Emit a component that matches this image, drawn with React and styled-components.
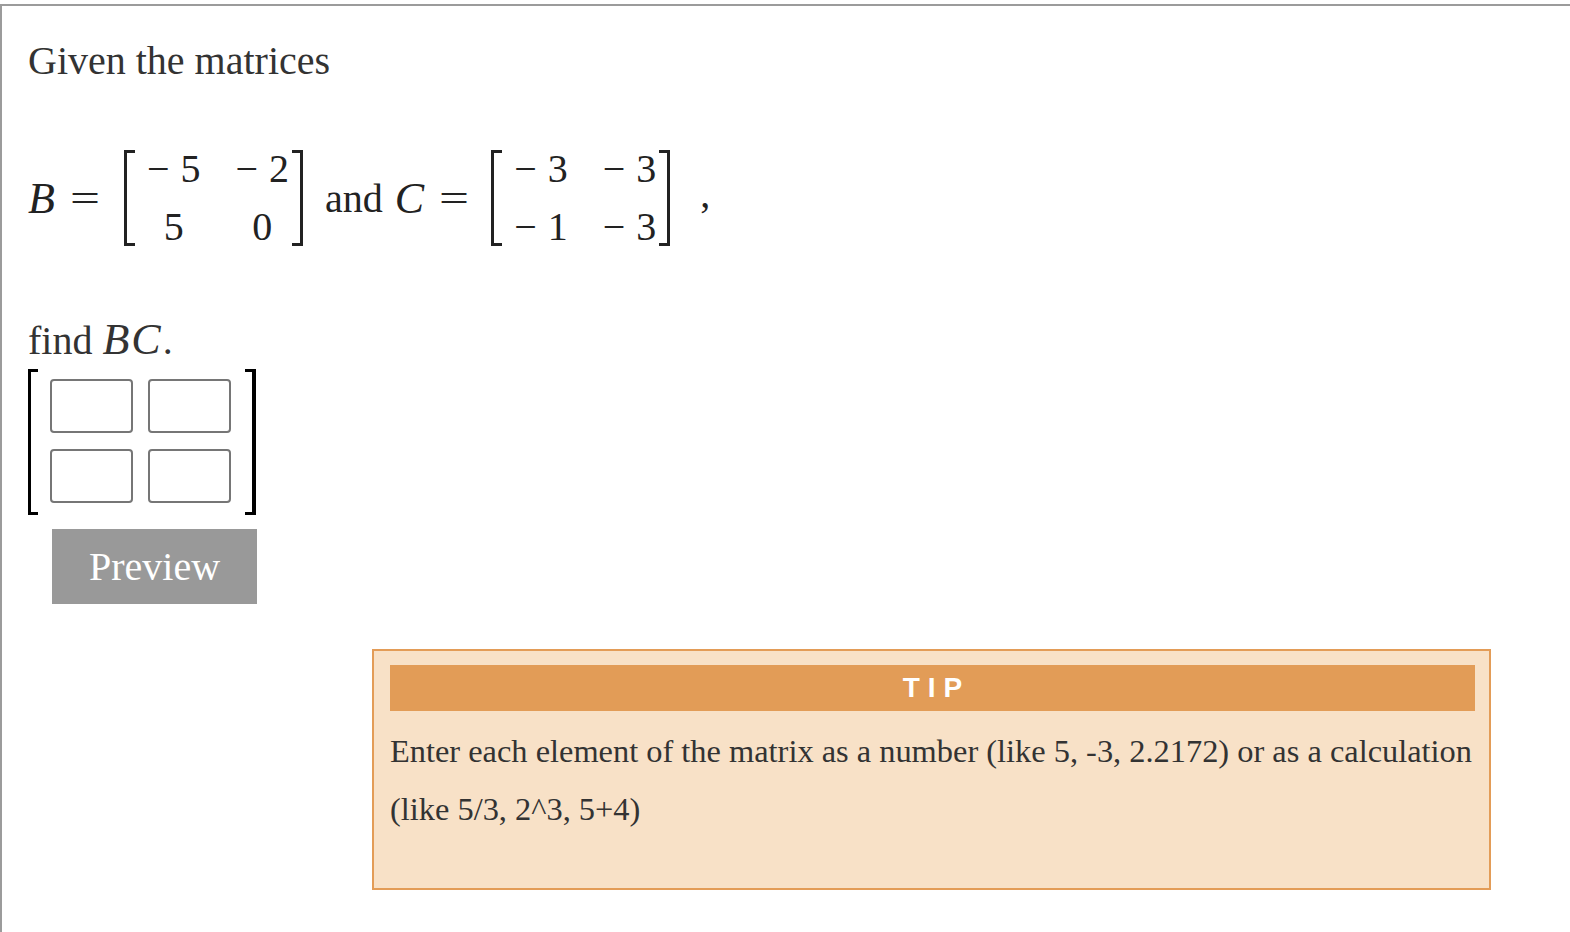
import React from "react";
import styled, { createGlobalStyle } from "styled-components";

const Global = createGlobalStyle`
  html, body { margin: 0; padding: 0; background: #fff; }
  body { font-family: "Liberation Serif", "Times New Roman", serif; color: #333; }
  * { box-sizing: border-box; }
`;

const Page = styled.div`
  margin-top: 4px;
  border-top: 2px solid #9b9b9b;
  border-left: 2px solid #9b9b9b;
  padding: 32px 0 0 26px;
  min-height: calc(100vh - 4px);
`;

const Para = styled.p`
  margin: 0;
  font-size: 40px;
  line-height: 46px;
  color: #333;
`;

const MathRow = styled.div`
  display: flex;
  align-items: center;
  margin-top: ${(p) => p.$top || 0}px;
  font-size: 40px;
  color: #222;
  height: 96px;
`;

const Var = styled.span`
  font-style: italic;
  font-size: 44px;
  letter-spacing: ${(p) => p.$ls || 0}px;
  margin-right: ${(p) => p.$mr || 0}px;
`;

const Eq = styled.span`
  display: inline-block;
  width: 30px;
  text-align: center;
  margin: 0 ${(p) => p.$mr ?? 24}px 0 ${(p) => p.$ml ?? 14}px;
  transform: scaleX(1.33);
`;

const Word = styled.span`
  margin: 0 12px 0 ${(p) => p.$ml || 0}px;
`;

const Bracket = styled.span`
  display: block;
  width: 11px;
  align-self: stretch;
  border: 0 solid #222;
  border-top-width: 3px;
  border-bottom-width: 3px;
  ${(p) => (p.$right ? "border-right-width: 3px;" : "border-left-width: 3px;")}
`;

const MatrixBody = styled.div`
  display: grid;
  grid-template-columns: auto auto;
  grid-auto-rows: 58px;
  column-gap: 35px;
  align-items: center;
  justify-items: center;
  padding: 0 3px 0 12px;
`;

const Entry = styled.span`
  display: inline-flex;
  align-items: center;
  line-height: 1;
`;

const Minus = styled.span`
  margin-right: 11px;
`;

const Comma = styled.span`
  margin-left: 30px;
  align-self: center;
  transform: translateY(-5px);
`;

const Matrix = ({ rows }) => (
  <>
    <Bracket />
    <MatrixBody>
      {rows.flat().map((v, i) => (
        <Entry key={i}>
          {v < 0 && <Minus>−</Minus>}
          {Math.abs(v)}
        </Entry>
      ))}
    </MatrixBody>
    <Bracket $right />
  </>
);

const FindPara = styled(Para)`
  margin-top: 71px;
`;

const AnswerMatrix = styled.div`
  display: flex;
  margin-top: 5px;
  height: 146px;
`;

const AnswerBracket = styled.span`
  display: block;
  width: ${(p) => (p.$right ? 11 : 10)}px;
  border: 0 solid #000;
  border-top-width: 3px;
  border-bottom-width: 3px;
  ${(p) => (p.$right ? "border-right-width: 4px;" : "border-left-width: 3px;")}
`;

const AnswerGrid = styled.div`
  display: grid;
  grid-template-columns: 83px 83px;
  grid-template-rows: 54px 54px;
  column-gap: 15px;
  row-gap: 16px;
  padding: 10px 14px 0 12px;
`;

const Cell = styled.input`
  width: 83px;
  height: 54px;
  border: 2px solid #767676;
  border-radius: 4px;
  background: #fff;
  font-size: 24px;
  padding: 0 6px;
  margin: 0;
  outline: none;
`;

const PreviewButton = styled.button`
  display: block;
  margin: 14px 0 0 24px;
  width: 205px;
  height: 75px;
  background: #999;
  border: none;
  color: #fff;
  font-family: "Liberation Serif", "Times New Roman", serif;
  font-size: 40px;
  padding: 0;
  cursor: pointer;
`;

const TipBox = styled.div`
  margin: 45px 0 0 344px;
  width: 1119px;
  background: #f8e1c7;
  border: 2px solid #e39c57;
  padding: 14px 14px 16px 16px;
`;

const TipHeader = styled.div`
  height: 46px;
  background: #e29c57;
  color: #fff;
  display: flex;
  align-items: center;
  justify-content: center;
  font-family: "Liberation Sans", Arial, sans-serif;
  font-weight: 700;
  font-size: 28px;
  letter-spacing: 8px;
  padding-left: 8px;
`;

const TipText = styled.p`
  margin: 11px 0 34px;
  font-size: 32.4px;
  line-height: 58px;
  color: #333;
`;

export default function App() {
  return (
    <>
      <Global />
      <Page>
        <Para>Given the matrices</Para>
        <MathRow $top={66}>
          <Var>B</Var>
          <Eq $ml={15}>=</Eq>
          <Matrix rows={[[-5, -2], [5, 0]]} />
          <Word $ml={22}>and</Word>
          <Var>C</Var>
          <Eq $ml={15} $mr={22}>=</Eq>
          <Matrix rows={[[-3, -3], [-1, -3]]} />
          <Comma>,</Comma>
        </MathRow>
        <FindPara>
          find <Var $ls={2}>BC</Var>.
        </FindPara>
        <AnswerMatrix>
          <AnswerBracket />
          <AnswerGrid>
            <Cell aria-label="row 1 column 1" />
            <Cell aria-label="row 1 column 2" />
            <Cell aria-label="row 2 column 1" />
            <Cell aria-label="row 2 column 2" />
          </AnswerGrid>
          <AnswerBracket $right />
        </AnswerMatrix>
        <PreviewButton>Preview</PreviewButton>
        <TipBox>
          <TipHeader>TIP</TipHeader>
          <TipText>
            Enter each element of the matrix as a number (like 5, -3, 2.2172) or as a calculation (like 5/3, 2^3, 5+4)
          </TipText>
        </TipBox>
      </Page>
    </>
  );
}
